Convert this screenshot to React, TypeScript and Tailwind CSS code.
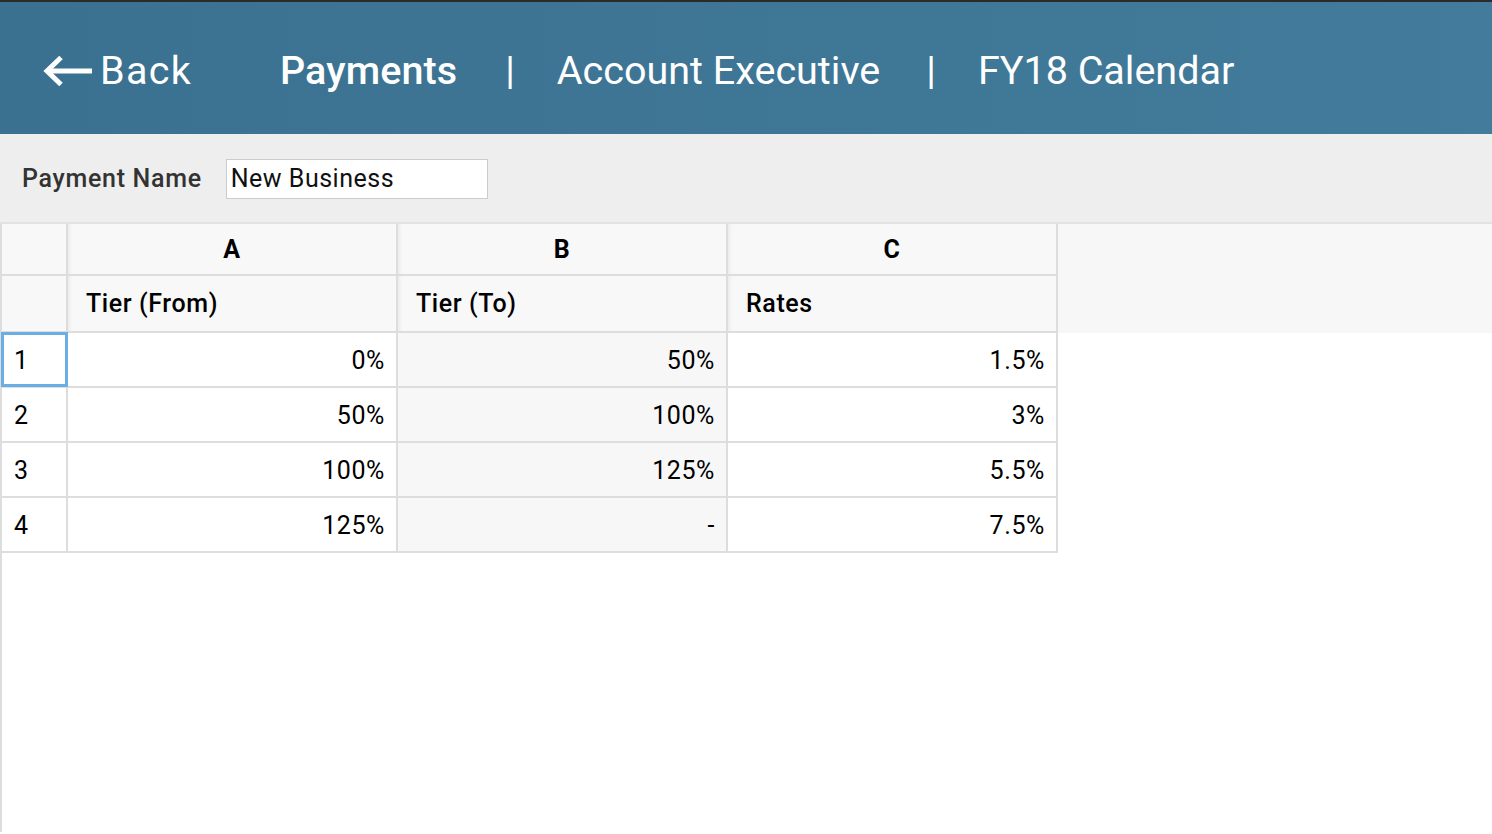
const COLS = [
  { letter: "A", title: "Tier (From)" },
  { letter: "B", title: "Tier (To)" },
  { letter: "C", title: "Rates" },
];

const ROWS = [
  ["0%", "50%", "1.5%"],
  ["50%", "100%", "3%"],
  ["100%", "125%", "5.5%"],
  ["125%", "-", "7.5%"],
];

function BackArrow() {
  return (
    <svg width="52" height="34" viewBox="0 0 52 34" fill="none" className="shrink-0">
      <path d="M50 17H6" stroke="white" strokeWidth="5" />
      <path d="M19 3.5L5 17l14 13.5" stroke="white" strokeWidth="5" strokeLinejoin="miter" />
    </svg>
  );
}

export default function App() {
  return (
    <div className="min-h-screen bg-white font-['Roboto','Liberation_Sans',sans-serif] text-[#1a1a1a]">
      <div className="h-[2px] bg-[#2b2b2b]" />

      {/* Header */}
      <header className="h-[132px] bg-gradient-to-r from-[#3b7190] to-[#427b9b] flex items-center pt-[6px] text-white text-[39.5px] leading-none pl-[42px]">
        <div className="flex items-center">
          <BackArrow />
          <span className="ml-[6px] tracking-[1.3px]">Back</span>
        </div>
        <span className="ml-[88px] font-medium tracking-[0.1px]">Payments</span>
        <span className="ml-[48px]">|</span>
        <span className="ml-[42px]">Account Executive</span>
        <span className="ml-[46px]">|</span>
        <span className="ml-[42px]">FY18 Calendar</span>
      </header>

      {/* Payment name */}
      <div className="h-[88px] bg-[#eeeeee] flex items-center pl-[22px] pt-[2px]">
        <label className="text-[25px] font-medium tracking-[0.7px] text-[#333333]">Payment Name</label>
        <div className="ml-[24px] w-[262px] h-[40px] bg-white border border-[#cccccc] flex items-center pl-[4px] text-[25px] tracking-[0.5px] text-[#111]">
          New Business
        </div>
      </div>

      {/* Grid */}
      <div className="border-t-2 border-[#e2e2e2] border-l-2 border-l-[#dddddd] min-h-[610px] text-[25px] tracking-[0.6px]">
        <div className="bg-[#f7f7f7] w-full">
          <div className="flex h-[52px] border-b-2 border-[#dddddd] w-[1056px]">
            <div className="w-[66px] border-r-2 border-[#dddddd] bg-[#f8f8f8]" />
            {COLS.map((c) => (
              <div
                key={c.letter}
                className="w-[330px] border-r-2 border-[#dddddd] bg-[#f8f8f8] flex items-center justify-center pt-[2px] font-bold text-black shadow-[inset_4px_0_4px_-3px_rgba(0,0,0,0.08)]"
              >
                {c.letter}
              </div>
            ))}
          </div>
          <div className="flex h-[57px] border-b-2 border-[#dddddd] w-[1056px]">
            <div className="w-[66px] border-r-2 border-[#dddddd] bg-[#f8f8f8]" />
            {COLS.map((c) => (
              <div
                key={c.title}
                className="w-[330px] border-r-2 border-[#dddddd] bg-[#f8f8f8] flex items-center pl-[18px] font-medium text-black shadow-[inset_4px_0_4px_-3px_rgba(0,0,0,0.08)]"
              >
                {c.title}
              </div>
            ))}
          </div>
        </div>

        {ROWS.map((r, i) => (
          <div key={i} className="flex h-[55px] border-b-2 border-[#dddddd] w-[1056px]">
            <div className="relative w-[66px] border-r-2 border-[#dddddd] flex items-center pl-[12px] pt-[2px] text-black">
              {i + 1}
              {i === 0 && <div className="absolute -left-[1px] -top-[1px] -right-[2px] -bottom-[1px] border-[3px] border-[#6aaee4]" />}
            </div>
            {r.map((v, j) => (
              <div
                key={j}
                className={`w-[330px] border-r-2 border-[#dddddd] flex items-center justify-end pr-[11px] pt-[2px] text-black ${
                  j === 1 ? "bg-[#f7f7f7]" : "bg-white"
                }`}
              >
                {v}
              </div>
            ))}
          </div>
        ))}
      </div>
    </div>
  );
}
